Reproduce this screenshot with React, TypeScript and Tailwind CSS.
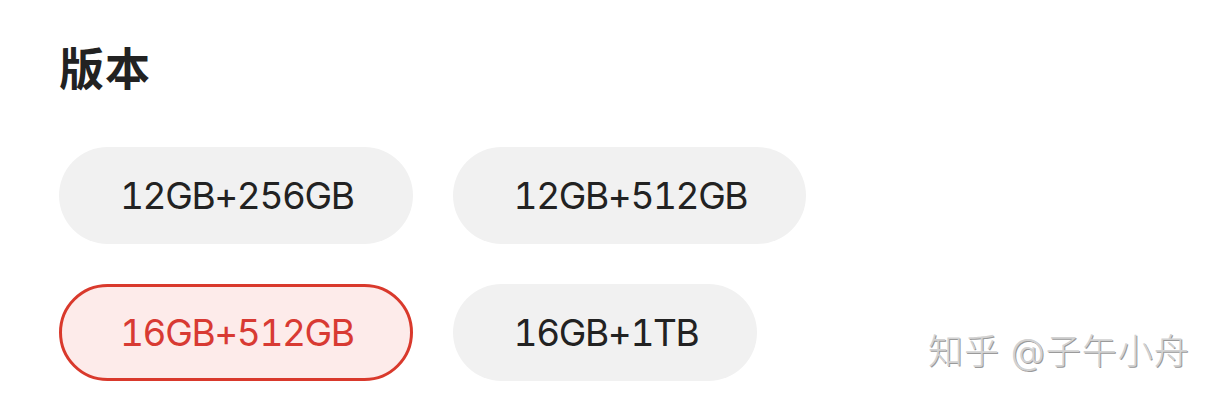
import React, { useState } from "react";

const options = ["12GB+256GB", "12GB+512GB", "16GB+512GB", "16GB+1TB"];

const VersionPill: React.FC<{ label: string; active: boolean; onClick: () => void }> = ({
  label,
  active,
  onClick,
}) => {
  return (
    <button
      onClick={onClick}
      className={
        active
          ? "h-[97px] pl-[58px] pr-[56px] rounded-full border-[3px] border-[#d9392c] bg-[#fdebea] text-[#d83a33] text-[37px] leading-none tabular-nums tracking-[-1.4px] font-[380]"
          : "h-[97px] pl-[61px] pr-[59px] rounded-full border-0 bg-[#f1f1f1] text-[#222222] text-[37px] leading-none tabular-nums tracking-[-1.4px] font-[380]"
      }
    >
      {label}
    </button>
  );
};

const App: React.FC = () => {
  const [selected, setSelected] = useState<string>("16GB+512GB");

  return (
    <div
      className="relative w-[1220px] h-[405px] bg-white overflow-hidden"
      style={{ fontFamily: '"Inter", "Noto Sans CJK SC", sans-serif' }}
    >
      <div className="pl-[59px] pt-[47px]">
        <h2 className="text-[45px] font-bold leading-none text-[#222222] tracking-[1px]">版本</h2>
        <div className="mt-[55px] grid grid-cols-[auto_auto] justify-start gap-x-[40px] gap-y-[40px]">
          {options.map((o) => (
            <div key={o} className="flex">
              <VersionPill label={o} active={selected === o} onClick={() => setSelected(o)} />
            </div>
          ))}
        </div>
      </div>
      {/* watermark */}
      <div
        className="absolute left-[928px] top-[334px] text-[35px] leading-none text-[#d2d2d2] tracking-[1px] font-light"
        style={{ textShadow: "1px 1px 0 #9a9a9a" }}
      >
        知乎 @子午小舟
      </div>
    </div>
  );
};

export default App;
